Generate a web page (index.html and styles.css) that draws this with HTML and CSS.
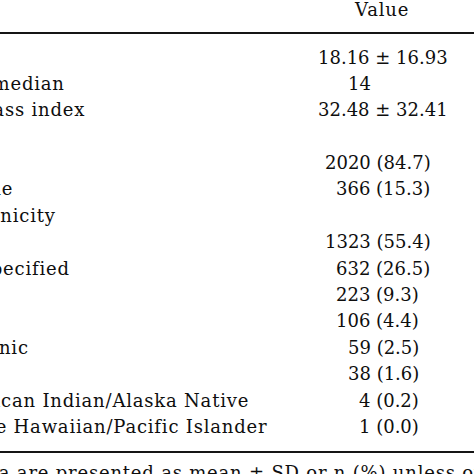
FILE: index.html
```html
<!DOCTYPE html>
<html lang="en">
<head>
<meta charset="utf-8">
<title>Table</title>
<link rel="stylesheet" href="styles.css">
</head>
<body>
<div class="page">
  <div class="table">
    <div class="head">
      <span class="lab">Characteristic</span>
      <span class="val hv">Value</span>
    </div>
    <div class="rule"></div>
    <div class="rows">
      <div class="row"><span class="lab">Age</span><span class="val pm">18.16 ± 16.93</span></div>
      <div class="row"><span class="lab sub">Age, median</span><span class="val v2">14</span></div>
      <div class="row"><span class="lab bmi">Body mass index</span><span class="val pm">32.48 ± 32.41</span></div>
      <div class="row"><span class="lab">Sex</span><span class="val"></span></div>
      <div class="row"><span class="lab sub">Male</span><span class="val v4">2020 (84.7)</span></div>
      <div class="row"><span class="lab sub">Female</span><span class="val v3">366 (15.3)</span></div>
      <div class="row"><span class="lab">Race/ethnicity</span><span class="val"></span></div>
      <div class="row"><span class="lab sub">White</span><span class="val v4">1323 (55.4)</span></div>
      <div class="row"><span class="lab sub ns">Not specified</span><span class="val v3">632 (26.5)</span></div>
      <div class="row"><span class="lab sub">Black</span><span class="val v3">223 (9.3)</span></div>
      <div class="row"><span class="lab sub">Asian</span><span class="val v3">106 (4.4)</span></div>
      <div class="row"><span class="lab sub">Hispanic</span><span class="val v2">59 (2.5)</span></div>
      <div class="row"><span class="lab sub">Other</span><span class="val v2">38 (1.6)</span></div>
      <div class="row"><span class="lab sub">American Indian/Alaska Native</span><span class="val v1">4 (0.2)</span></div>
      <div class="row"><span class="lab sub">Native Hawaiian/Pacific Islander</span><span class="val v1">1 (0.0)</span></div>
    </div>
    <div class="rule bottom"></div>
    <p class="note">Data are presented as mean ± SD or n (%) unless otherwise noted.</p>
  </div>
</div>
</body>
</html>
```

FILE: styles.css
```css
html, body {
  margin: 0;
  padding: 0;
  background: #ffffff;
}
body {
  width: 474px;
  height: 474px;
  overflow: hidden;
}
.page {
  width: 474px;
  height: 474px;
  overflow: hidden;
  font-family: "DejaVu Serif", "Liberation Serif", serif;
  font-size: 18px;
  color: #0e0e0e;
}
.table {
  margin-left: -87px;
  width: 620px;
}
.head, .row {
  display: grid;
  grid-template-columns: 405px 1fr;
  white-space: nowrap;
}
.head {
  line-height: 18px;
  height: 18px;
  padding-top: 1px;
}
.head .lab {
  margin-left: -60px;
}
.rule {
  height: 2px;
  background: #151515;
  margin-top: 13px;
  width: 620px;
}
.rule.bottom {
  margin-top: 11px;
}
.rows {
  padding-top: 10.5px;
}
.row {
  line-height: 26.4px;
  height: 26.4px;
}
.lab {
  letter-spacing: 0.8px;
}
.lab.sub {
  padding-left: 29px;
}
.lab.sub.ns {
  padding-left: 25px;
}
.lab.bmi {
  padding-left: 7px;
}
.hv {
  padding-left: 37px;
  letter-spacing: 0.8px;
}
.pm { padding-left: 0; }
.v4 { padding-left: 7px; }
.v3 { padding-left: 18px; }
.v2 { padding-left: 30px; }
.v1 { padding-left: 41px; }
.note {
  margin: 7px 0 0 51px;
  line-height: 26.4px;
  letter-spacing: 0.8px;
  white-space: nowrap;
}
```
